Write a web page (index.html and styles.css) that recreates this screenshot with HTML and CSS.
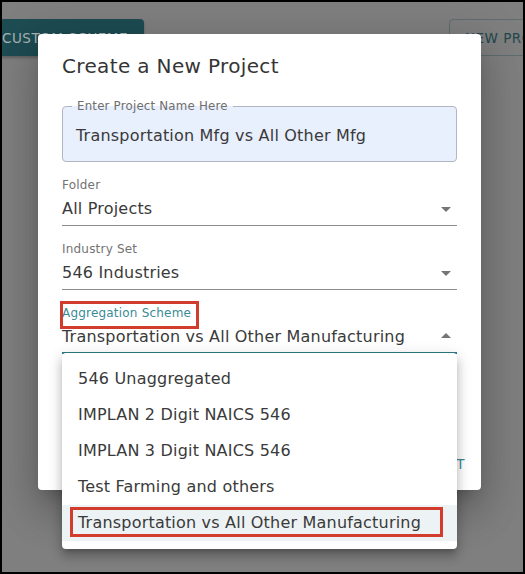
FILE: index.html
```html
<!DOCTYPE html>
<html lang="en">
<head>
<meta charset="utf-8">
<title>Create a New Project</title>
<link rel="stylesheet" href="styles.css">
</head>
<body>
<div class="frame">
  <div class="appbar">
    <button class="btn-contained">Custom Scheme</button>
    <button class="btn-outlined">New Project</button>
  </div>

  <div class="dialog">
    <h2 class="dialog-title">Create a New Project</h2>
    <div class="dialog-content">
      <div class="outlined-field">
        <span class="outlined-label">Enter Project Name Here</span>
        <span class="outlined-value">Transportation Mfg vs All Other Mfg</span>
      </div>

      <div class="select">
        <span class="select-label">Folder</span>
        <div class="select-row">
          <span class="select-value">All Projects</span>
          <span class="arrow down"></span>
        </div>
      </div>

      <div class="select">
        <span class="select-label">Industry Set</span>
        <div class="select-row">
          <span class="select-value">546 Industries</span>
          <span class="arrow down"></span>
        </div>
      </div>

      <div class="select focused">
        <span class="select-label">Aggregation Scheme</span>
        <span class="annotation label-annotation"></span>
        <div class="select-row">
          <span class="select-value">Transportation vs All Other Manufacturing</span>
          <span class="arrow up"></span>
        </div>
        <ul class="menu">
          <li class="menu-item">546 Unaggregated</li>
          <li class="menu-item">IMPLAN 2 Digit NAICS 546</li>
          <li class="menu-item">IMPLAN 3 Digit NAICS 546</li>
          <li class="menu-item">Test Farming and others</li>
          <li class="menu-item selected">Transportation vs All Other Manufacturing<span class="annotation item-annotation"></span></li>
        </ul>
      </div>
    </div>
    <div class="dialog-actions">
      <button class="btn-text">Cancel</button>
      <button class="btn-text">Create Project</button>
    </div>
  </div>
</div>
</body>
</html>
```
FILE: styles.css
```css
* { box-sizing: border-box; }

html, body {
  margin: 0;
  padding: 0;
  background: #000;
}

body {
  font-family: "DejaVu Sans", "Open Sans", sans-serif;
  letter-spacing: 0.2px;
}

.frame {
  position: relative;
  margin: 2px;
  width: 521px;
  height: 570px;
  background: #7f7f7f;
  overflow: hidden;
}

/* background page (dimmed by the modal backdrop) */
.appbar {
  display: flex;
  justify-content: space-between;
  align-items: flex-start;
  padding-top: 17px;
}

.btn-contained,
.btn-outlined {
  font-family: inherit;
  font-size: 13.5px;
  font-weight: 500;
  letter-spacing: 0.5px;
  text-transform: uppercase;
  height: 37px;
  border-radius: 4px;
  padding: 0 16px;
  white-space: nowrap;
}

.btn-contained {
  margin-left: -16px;
  background: #1d4c52;
  color: #a7b3b5;
  border: 0;
  box-shadow: 0 2px 3px rgba(0, 0, 0, 0.25);
}

.btn-outlined {
  margin-right: -58px;
  background: transparent;
  color: #22474c;
  border: 1px solid #5e6d6f;
  padding: 0 15px;
}

/* dialog */
.dialog {
  position: absolute;
  left: 36px;
  top: 32px;
  width: 443px;
  height: 456px;
  background: #fff;
  border-radius: 4px;
  box-shadow: 0 11px 15px -7px rgba(0, 0, 0, 0.2),
              0 24px 38px 3px rgba(0, 0, 0, 0.14),
              0 9px 46px 8px rgba(0, 0, 0, 0.12);
  display: flex;
  flex-direction: column;
}

.dialog-title {
  margin: 0;
  padding: 16px 24px;
  font-size: 20px;
  font-weight: 400;
  line-height: 32px;
  color: #353535;
  letter-spacing: 0.35px;
}

.dialog-content {
  padding: 8px 24px 0;
  flex: 1;
}

.outlined-field {
  position: relative;
  height: 56px;
  background: #e8effd;
  border: 1px solid #b3b6c2;
  border-radius: 4px;
  display: flex;
  align-items: center;
  padding: 0 13px;
}

.outlined-label {
  position: absolute;
  left: 9px;
  top: -8px;
  padding: 0 5px;
  font-size: 11.8px;
  line-height: 14px;
  color: #6e6e6e;
  background: linear-gradient(#fff 0 50%, #e8effd 50% 100%);
}

.outlined-value {
  font-size: 16px;
  color: #3a3a3a;
  padding-top: 3px;
}

.select {
  position: relative;
  margin-top: 16px;
  height: 48px;
  display: flex;
  flex-direction: column;
}

.select-label {
  font-size: 12px;
  line-height: 14px;
  color: #737373;
}

.select-row {
  height: 34px;
  display: flex;
  align-items: center;
  justify-content: space-between;
  border-bottom: 1px solid #8c8c8c;
  padding-right: 6px;
}

.select-value {
  font-size: 16px;
  color: #3a3a3a;
}

.focused .select-label {
  color: #3a8b96;
}

.focused .select-row {
  border-bottom: 2px solid #2f7a85;
}

.arrow {
  width: 0;
  height: 0;
  border-left: 5px solid transparent;
  border-right: 5px solid transparent;
}

.arrow.down {
  border-top: 5px solid #757575;
  margin-top: 2px;
}

.arrow.up {
  border-bottom: 5px solid #757575;
  margin-bottom: 2px;
}

/* annotation boxes drawn over the screenshot */
.annotation {
  position: absolute;
  border: 3px solid #d23c2c;
  pointer-events: none;
}

.label-annotation {
  left: -2px;
  top: -5px;
  width: 139px;
  height: 28px;
}

/* dropdown menu */
.menu {
  position: absolute;
  left: 0;
  right: 0;
  top: calc(100% - 1px);
  margin: 0;
  padding: 8px 0;
  list-style: none;
  background: #fff;
  border-radius: 4px;
  box-shadow: 0 5px 5px -3px rgba(0, 0, 0, 0.2),
              0 8px 10px 1px rgba(0, 0, 0, 0.14),
              0 3px 14px 2px rgba(0, 0, 0, 0.12);
  z-index: 2;
}

.menu-item {
  position: relative;
  height: 36px;
  line-height: 36px;
  padding: 0 16px;
  font-size: 16px;
  color: #3a3a3a;
  white-space: nowrap;
}

.menu-item.selected {
  background: #edf2f5;
}

.item-annotation {
  left: 8px;
  top: 2px;
  width: 373px;
  height: 30px;
}

/* dialog actions (mostly covered by the menu) */
.dialog-actions {
  display: flex;
  justify-content: flex-end;
  gap: 8px;
  padding: 8px;
}

.btn-text {
  font-family: inherit;
  height: 36px;
  padding: 0 8px;
  border: 0;
  background: transparent;
  color: #3a8b96;
  font-size: 13.5px;
  font-weight: 500;
  letter-spacing: 0.5px;
  text-transform: uppercase;
}
```
